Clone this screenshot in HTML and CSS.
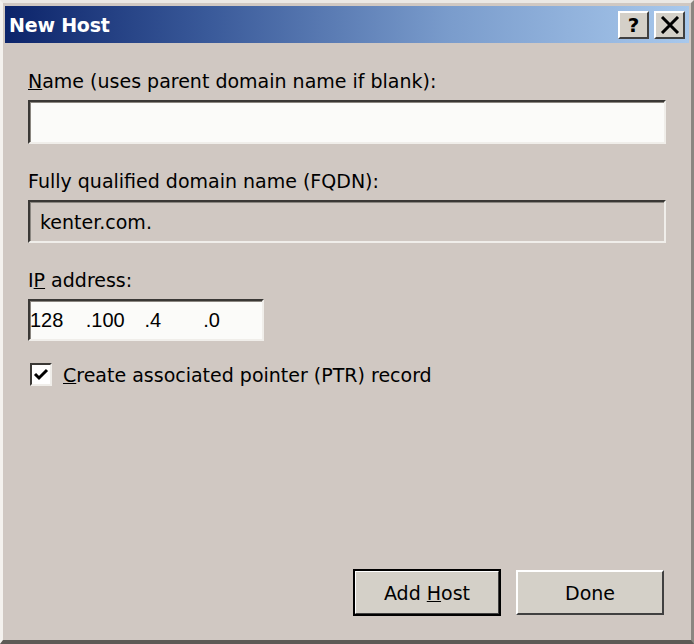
FILE: index.html
```html
<!DOCTYPE html>
<html lang="en">
<head>
  <meta charset="UTF-8" />
  <title>New Host</title>
  <link rel="stylesheet" href="styles.css">
</head>
<body>
  <div class="dialog">
    <div class="titlebar">
      <span class="title">New Host</span>
      <div class="title-buttons">
        <button class="cap-btn">?</button>
        <button class="cap-btn close">
          <svg width="20" height="18" viewBox="0 0 20 18"><path d="M2 1 L18 17 M18 1 L2 17" stroke="#000" stroke-width="3"/></svg>
        </button>
      </div>
    </div>
    <div class="content">
      <label class="field-label"><u>N</u>ame (uses parent domain name if blank):</label>
      <div class="textbox"></div>
      <label class="field-label gap">Fully qualified domain name (FQDN):</label>
      <div class="textbox disabled">kenter.com.</div>
      <label class="field-label gap">I<u>P</u> address:</label>
      <div class="textbox ip">
        <span class="oct o1">128</span><span class="oct">.100</span><span class="oct">.4</span><span class="oct">.0</span>
      </div>
      <div class="check-row">
        <span class="checkbox">
          <svg width="16" height="14" viewBox="0 0 16 14"><path d="M2 6 L6 10 L14 2" fill="none" stroke="#000" stroke-width="3"/></svg>
        </span>
        <span><u>C</u>reate associated pointer (PTR) record</span>
      </div>
      <div class="spacer"></div>
      <div class="actions">
        <button class="btn default">Add <u>H</u>ost</button>
        <button class="btn">Done</button>
      </div>
    </div>
  </div>
</body>
</html>
```

FILE: styles.css
```css
* {
  box-sizing: border-box;
}
body {
  margin: 0;
  background: #d0c9c3;
  font-family: "DejaVu Sans", Verdana, sans-serif;
  color: #000;
}
.dialog {
  width: 694px;
  height: 644px;
  display: flex;
  flex-direction: column;
  background: #d0c8c2;
  border-top: 3px solid #ebe8e4;
  border-left: 3px solid #f4f2ee;
  border-right: 3px solid #8a8680;
  border-bottom: 4px solid #5e5a56;
  padding: 3px 2px 0 2px;
}
.titlebar {
  height: 37px;
  display: flex;
  align-items: center;
  justify-content: space-between;
  background: linear-gradient(to right, #0c246a 0%, #3a5a9a 30%, #7a9ccc 65%, #a8c8ec 100%);
  padding: 0 4px 0 4px;
}
.title {
  color: #fff;
  font-weight: bold;
  font-size: 19px;
  letter-spacing: -0.2px;
}
.title-buttons {
  display: flex;
  gap: 5px;
}
.cap-btn {
  width: 31px;
  height: 28px;
  padding: 0;
  background: #d4d0c8;
  border: 2px solid;
  border-color: #fff #404040 #404040 #fff;
  font-family: "DejaVu Sans", sans-serif;
  font-weight: bold;
  font-size: 20px;
  line-height: 24px;
  display: flex;
  align-items: center;
  justify-content: center;
}
.content {
  flex: 1;
  display: flex;
  flex-direction: column;
  padding: 27px 23px 25px 23px;
  font-size: 19px;
}
.field-label {
  display: block;
  line-height: 22px;
  margin-bottom: 8px;
}
.field-label.gap {
  margin-top: 26px;
}
.textbox {
  height: 44px;
  width: 638px;
  background: #fbfbf9;
  border-top: 2px solid #3a3835;
  border-left: 2px solid #3a3835;
  border-right: 2px solid #f0eeea;
  border-bottom: 2px solid #f0eeea;
  box-shadow: inset 1px 1px 0 #8a8680;
  padding: 0 10px;
  display: flex;
  align-items: center;
}
.textbox.disabled {
  background: #d0c8c2;
  height: 43px;
}
.textbox.ip {
  width: 236px;
  height: 42px;
  padding: 0;
  font-family: "Liberation Sans", Arial, sans-serif;
  font-size: 20px;
}
.oct {
  width: 60px;
}
.oct.o1 {
  width: 57px;
}
.check-row {
  display: flex;
  align-items: center;
  gap: 11px;
  margin-top: 22px;
  margin-left: 2px;
}
.checkbox {
  width: 22px;
  height: 23px;
  background: #fff;
  border-top: 2px solid #3a3835;
  border-left: 2px solid #3a3835;
  border-right: 2px solid #f0eeea;
  border-bottom: 2px solid #f0eeea;
  display: flex;
  align-items: center;
  justify-content: center;
}
.spacer {
  flex: 1;
}
.actions {
  display: flex;
  justify-content: flex-end;
  gap: 16px;
  padding-right: 2px;
}
.btn {
  width: 148px;
  height: 45px;
  background: #d4d0c8;
  border: 2px solid;
  border-color: #fff #404040 #404040 #fff;
  font-family: "DejaVu Sans", sans-serif;
  font-size: 19px;
  color: #000;
}
.btn.default {
  width: 146px;
  outline: 2px solid #000;
  outline-offset: -1px;
}
```
